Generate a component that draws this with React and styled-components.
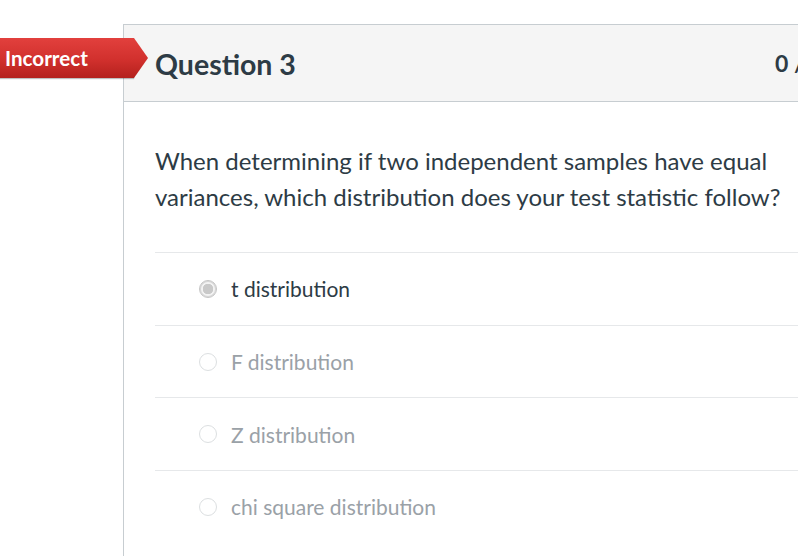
import React from "react";
import styled, { createGlobalStyle } from "styled-components";

const GlobalStyle = createGlobalStyle`
  html, body {
    margin: 0;
    padding: 0;
    background: #ffffff;
    overflow: hidden;
  }
  body {
    font-family: Lato, "Open Sans", "Liberation Sans", sans-serif;
    color: #2d3b45;
  }
`;

const Page = styled.div`
  padding-top: 24px;
  width: 798px;
  height: 556px;
  overflow: hidden;
`;

const Panel = styled.div`
  position: relative;
  margin-left: 123px;
  width: 780px;
  min-height: 560px;
  border: 1px solid #c7cdd1;
  border-bottom: none;
`;

const badgeFill = "linear-gradient(180deg, #e2403d 0%, #d1302d 55%, #b4211d 100%)";

const Badge = styled.div`
  position: absolute;
  top: 13px;
  left: -124px;
  width: 134px;
  height: 40px;
  display: flex;
  align-items: center;
  padding-left: 5px;
  box-sizing: border-box;
  background: ${badgeFill};
  color: #ffffff;
  font-size: 20.6px;
  font-weight: 700;
  box-shadow: 0 1px 1px rgba(0, 0, 0, 0.25);

  &::after {
    content: "";
    position: absolute;
    top: 0;
    right: -14px;
    width: 14px;
    height: 40px;
    background: ${badgeFill};
    clip-path: polygon(0 0, 100% 50%, 0 100%);
  }
`;

const Header = styled.div`
  height: 76px;
  display: flex;
  align-items: center;
  padding: 0 18px 0 31px;
  background: #f5f5f5;
  border-bottom: 1px solid #c7cdd1;
`;

const Title = styled.h2`
  flex: 1;
  margin: 0;
  font-size: 28.5px;
  font-weight: 700;
  color: #2d3b45;
  padding-top: 1px;
`;

const Points = styled.div`
  width: 111px;
  font-size: 23px;
  font-weight: 700;
  color: #2d3b45;
  white-space: nowrap;
`;

const Body = styled.div`
  padding: 41px 0 0 31px;
`;

const QuestionText = styled.p`
  margin: 0 0 37px;
  font-size: 24px;
  line-height: 36px;
  color: #2d3b45;
  width: 640px;
`;

const AnswerList = styled.div`
  display: flex;
  flex-direction: column;
`;

const AnswerRow = styled.label`
  height: 72.7px;
  box-sizing: border-box;
  display: flex;
  align-items: center;
  gap: 14px;
  padding-left: 44px;
  border-top: 1px solid #e6e8ea;
  font-size: 21px;
  color: ${({ selected }) => (selected ? "#2d3b45" : "#9aa1a7")};
`;

const Radio = styled.span`
  width: 16px;
  height: 16px;
  border-radius: 50%;
  flex-shrink: 0;
  border: 1px solid ${({ checked }) => (checked ? "#c4c4c4" : "#dcdfe1")};
  background: ${({ checked }) =>
    checked
      ? "radial-gradient(circle, #c9c9c9 0 5px, #f3f3f3 5.5px 100%)"
      : "#ffffff"};
  box-shadow: ${({ checked }) =>
    checked ? "inset 0 0 0 1px #d6d6d6" : "none"};
`;

const answers = [
  { label: "t distribution", selected: true },
  { label: "F distribution" },
  { label: "Z distribution" },
  { label: "chi square distribution" },
];

export default function App() {
  return (
    <Page>
      <GlobalStyle />
      <Panel>
        <Badge>Incorrect</Badge>
        <Header>
          <Title>Question 3</Title>
          <Points>0 / 1 pts</Points>
        </Header>
        <Body>
          <QuestionText>
            When determining if two independent samples have equal variances,
            which distribution does your test statistic follow?
          </QuestionText>
          <AnswerList>
            {answers.map((a) => (
              <AnswerRow key={a.label} selected={a.selected}>
                <Radio checked={a.selected} />
                {a.label}
              </AnswerRow>
            ))}
          </AnswerList>
        </Body>
      </Panel>
    </Page>
  );
}
